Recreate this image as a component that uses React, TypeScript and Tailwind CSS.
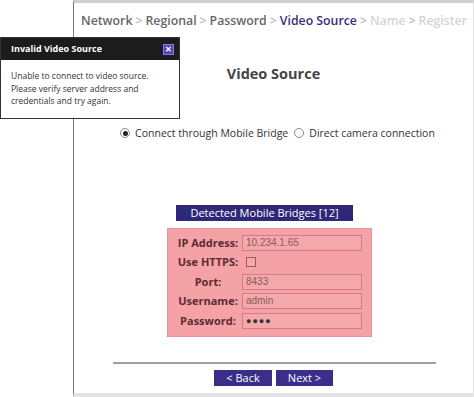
import React from "react";

const font = { fontFamily: '"Open Sans", "Noto Sans", sans-serif' };

function Sep() {
  return <span className="font-normal text-[#aaa] mx-[3px]">&gt;</span>;
}

function Row({ label, children }: { label: string; children: React.ReactNode }) {
  return (
    <div className="flex items-center h-[19.5px]">
      <div className="w-[68px] text-center text-[11px] font-bold text-[#5b2b30] whitespace-nowrap">{label}</div>
      {children}
    </div>
  );
}

function Field({ value }: { value: string }) {
  return (
    <div
      className="w-[120px] h-[16px] border border-[#d27d82] bg-[#f5a8ab] text-[10px] leading-[14px] pl-[3px] text-[#8a5a5c]"
      style={{ fontFamily: '"Liberation Sans", Arial, sans-serif' }}
    >
      {value}
    </div>
  );
}

export default function App() {
  return (
    <div className="relative w-[474px] h-[397px] bg-white overflow-hidden" style={font}>
      <div className="ml-[73px] w-[401px] h-[397px] border-l-[1.5px] border-l-[#7a7a7a] border-t-[3px] border-t-[#d0d0d0] border-r border-r-[#e0e0e0] border-b-[4px] border-b-[#e4e4e4] flex flex-col">
        <div className="pl-[7px] pt-[10px] text-[12.3px] font-semibold text-[#666] whitespace-nowrap leading-[16px]">
          Network<Sep />Regional<Sep />Password<Sep />
          <span className="text-[#3b2c7a]">Video Source</span>
          <Sep />
          <span className="text-[#d4d4d4]">Name</span>
          <Sep />
          <span className="text-[#d4d4d4]">Register</span>
        </div>
        <div className="mt-[36px] text-center text-[14.5px] font-bold text-[#444] leading-[18px]">Video Source</div>
        <div className="mt-[43px] flex items-center justify-center pl-[8px] text-[10.5px] text-[#333] leading-[14px]">
          <span className="w-[10px] h-[10px] rounded-full border border-[#888] flex items-center justify-center mr-[5px]">
            <span className="w-[5px] h-[5px] rounded-full bg-[#222]" />
          </span>
          Connect through Mobile Bridge
          <span className="w-[10px] h-[10px] rounded-full border border-[#888] ml-[6px] mr-[5px]" />
          Direct camera connection
        </div>
        <div className="mt-[65px] flex justify-center pr-[18px]">
          <div className="w-[177px] h-[16px] bg-[#2f2878] text-white text-[11px] leading-[16px] text-center">
            Detected Mobile Bridges [12]
          </div>
        </div>
        <div className="mt-[7px] flex justify-center pr-[8px]">
          <div className="w-[205px] h-[109px] bg-[#f4a2a5] border border-dotted border-[#d98a8e] pt-[4px] pl-[6px]">
            <Row label="IP Address:"><Field value="10.234.1.65" /></Row>
            <Row label="Use HTTPS:">
              <div className="ml-[4px] w-[10px] h-[10px] border border-[#9a5a5e] bg-[#f5a8ab]" />
            </Row>
            <Row label="Port:"><Field value="8433" /></Row>
            <Row label="Username:"><Field value="admin" /></Row>
            <Row label="Password:">
              <div className="w-[120px] h-[16px] border border-[#d27d82] bg-[#f5a8ab] text-[9px] leading-[14px] pl-[3px] text-[#333] tracking-[1px]">
                ●●●●
              </div>
            </Row>
          </div>
        </div>
        <div className="mt-[25px] mx-[39px] h-[2px] bg-[#a0a0a0] mr-[37px]" />
        <div className="mt-[6px] flex justify-center gap-[4px]">
          <div className="w-[58px] h-[16px] bg-[#3a2e8a] text-white text-[11px] leading-[16px] text-center">&lt; Back</div>
          <div className="w-[57px] h-[16px] bg-[#3a2e8a] text-white text-[11px] leading-[16px] text-center">Next &gt;</div>
        </div>
      </div>

      <div className="absolute left-0 top-[37px] w-[180px] border border-[#333] bg-white">
        <div className="h-[22px] bg-[#1c1c1c] flex items-center justify-between pl-[10px] pr-[5px]">
          <span className="text-white text-[9px] font-bold">Invalid Video Source</span>
          <span className="w-[11px] h-[11px] bg-[#5645b0] border border-[#8a7ae0] flex items-center justify-center text-white text-[8px] font-bold leading-none">
            ✕
          </span>
        </div>
        <div className="px-[10px] pt-[10px] pb-[10px] text-[8.5px] leading-[12.5px] text-[#333]">
          Unable to connect to video source.
          <br />
          Please verify server address and
          <br />
          credentials and try again.
        </div>
      </div>
    </div>
  );
}
